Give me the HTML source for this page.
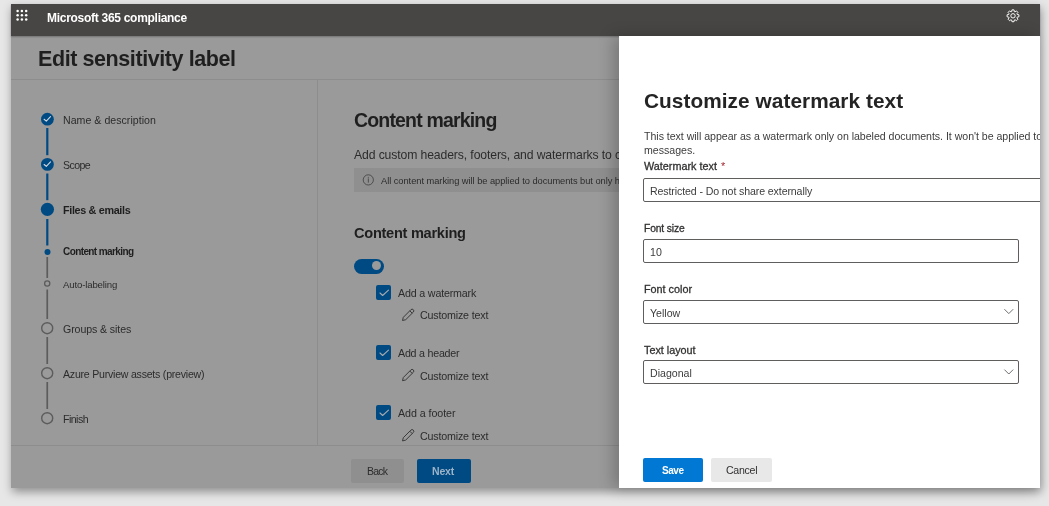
<!DOCTYPE html>
<html><head><meta charset="utf-8">
<style>
*{box-sizing:border-box;margin:0;padding:0}
html,body{width:1049px;height:506px;overflow:hidden;background:#e7e7e7;font-family:"Liberation Sans",sans-serif;position:relative}
.a{position:absolute}
.t{position:absolute;white-space:nowrap;line-height:1;will-change:transform}
#win{position:absolute;left:11px;top:4px;width:1029px;height:484px;background:#9a9a9a;box-shadow:1px 4px 9px rgba(0,0,0,0.38)}
#hdr{position:absolute;left:11px;top:4px;width:1029px;height:32px;background:#484644;box-shadow:0 1px 1.5px rgba(0,0,0,0.25)}
#panel{position:absolute;left:619px;top:36px;width:421px;height:452px;background:#fff;overflow:hidden}
#pshadow{position:absolute;left:619px;top:36px;width:421px;height:452px;box-shadow:-6px 0 14px rgba(0,0,0,0.22)}
.field{position:absolute;border:1px solid #605e5c;border-radius:2px;background:#fff}
.cb{position:absolute;width:15px;height:15px;background:#004a83;border-radius:2px}
</style></head>
<body>
<div id="win"></div>
<div id="hdr"></div>
<!-- app launcher -->
<svg class="a" style="left:15px;top:8px" width="14" height="14" viewBox="0 0 14 14">
  <g fill="#fff"><circle cx="2.6" cy="3" r="1.25"/><circle cx="6.9" cy="3" r="1.25"/><circle cx="11.2" cy="3" r="1.25"/>
  <circle cx="2.6" cy="7.3" r="1.25"/><circle cx="6.9" cy="7.3" r="1.25"/><circle cx="11.2" cy="7.3" r="1.25"/>
  <circle cx="2.6" cy="11.6" r="1.25"/><circle cx="6.9" cy="11.6" r="1.25"/><circle cx="11.2" cy="11.6" r="1.25"/></g>
</svg>
<div class=t style="left:47.00px;top:11.64px;font-size:12px;font-weight:bold;color:#ffffff;letter-spacing:-0.284px;">Microsoft 365 compliance</div>

<!-- gear -->
<svg class="a" style="left:1005px;top:8px" width="16" height="16" viewBox="0 0 16 16">
  <path d="M6.68 3.60 L6.96 1.89 L9.04 1.89 L9.32 3.60 L10.03 3.90 L11.44 2.89 L12.91 4.36 L11.90 5.77 L12.20 6.48 L13.91 6.76 L13.91 8.84 L12.20 9.12 L11.90 9.83 L12.91 11.24 L11.44 12.71 L10.03 11.70 L9.32 12.00 L9.04 13.71 L6.96 13.71 L6.68 12.00 L5.97 11.70 L4.56 12.71 L3.09 11.24 L4.10 9.83 L3.80 9.12 L2.09 8.84 L2.09 6.76 L3.80 6.48 L4.10 5.77 L3.09 4.36 L4.56 2.89 L5.97 3.90Z" fill="none" stroke="#fff" stroke-width="0.95" stroke-linejoin="round"/>
  <circle cx="8" cy="7.8" r="2.2" fill="none" stroke="#fff" stroke-width="0.95"/>
</svg>
<!-- dividers -->
<div class="a" style="left:11px;top:79px;width:608px;height:1px;background:#8d8d8d"></div>
<div class="a" style="left:317px;top:80px;width:1px;height:365px;background:#8d8d8d"></div>
<div class="a" style="left:11px;top:445px;width:608px;height:1px;background:#8d8d8d"></div>
<!-- nav -->
<svg class="a" style="left:0;top:0" width="320" height="445">
  <g fill="#004a83">
    <circle cx="47.4" cy="119.2" r="6.4"/>
    <circle cx="47.4" cy="164.4" r="6.4"/>
    <circle cx="47.4" cy="209.3" r="6.6"/>
    <circle cx="47.5" cy="252" r="3"/>
    <rect x="46.2" y="128" width="2.2" height="27.2"/>
    <rect x="46.2" y="173.5" width="2.2" height="26.7"/>
    <rect x="46.2" y="219" width="2.2" height="26.5"/>
  </g>
  <g fill="none" stroke="#d2d8de" stroke-width="1.1" stroke-linecap="round" stroke-linejoin="round">
    <path d="M44.1 119.3L46.3 121.1 50.5 116.7"/>
    <path d="M44.1 164.5L46.3 166.3 50.5 161.9"/>
  </g>
  <g fill="#5c5c5c">
    <rect x="46.4" y="257" width="1.7" height="21"/>
    <rect x="46.4" y="289.5" width="1.7" height="29.5"/>
    <rect x="46.4" y="337" width="1.7" height="27"/>
    <rect x="46.4" y="382" width="1.7" height="27"/>
  </g>
  <g fill="none" stroke="#5c5c5c">
    <circle cx="47.2" cy="283.5" r="2.6" stroke-width="1.3"/>
    <circle cx="47.2" cy="328.2" r="5.5" stroke-width="1.4"/>
    <circle cx="47.2" cy="373.2" r="5.5" stroke-width="1.4"/>
    <circle cx="47.2" cy="418.2" r="5.5" stroke-width="1.4"/>
  </g>
</svg>
<!-- info bar -->
<div class="a" style="left:353.5px;top:168px;width:266px;height:23.5px;background:#8f8f8f"></div>
<svg class="a" style="left:362px;top:174px" width="13" height="13" viewBox="0 0 13 13">
  <circle cx="6.3" cy="5.9" r="5.1" fill="none" stroke="#4a4a4a" stroke-width="0.95"/>
  <rect x="5.85" y="4.4" width="0.95" height="4.2" fill="#4a4a4a"/>
  <circle cx="6.32" cy="3.3" r="0.55" fill="#4a4a4a"/>
</svg>
<!-- toggle -->
<div class="a" style="left:353.5px;top:259px;width:30.5px;height:15px;border-radius:8px;background:#004a83"></div>
<div class="a" style="left:371.8px;top:261.3px;width:9.2px;height:9.2px;border-radius:50%;background:#9a9a9a"></div>
<!-- checkboxes -->
<div class="cb" style="left:376px;top:285px"></div>
<div class="cb" style="left:376px;top:345px"></div>
<div class="cb" style="left:376px;top:405px"></div>
<svg class="a" style="left:376px;top:285px" width="15" height="135">
  <g fill="none" stroke="#a6aaae" stroke-width="1.1" stroke-linecap="round" stroke-linejoin="round">
    <path d="M4 8L6.6 10.5 12.5 5.2"/>
    <path d="M4 68L6.6 70.5 12.5 65.2"/>
    <path d="M4 128L6.6 130.5 12.5 125.2"/>
  </g>
</svg>
<!-- pencils -->
<svg class="a" style="left:400px;top:307px" width="16" height="135">
  <g fill="none" stroke="#3a3a3a" stroke-width="1" stroke-linejoin="round">
    <path d="M2.5 13.5l0.8-3.2 7.6-7.6a1.3 1.3 0 0 1 2.4 2.4l-7.6 7.6z M9.8 3.8l2.4 2.4"/>
    <path d="M2.5 73.7l0.8-3.2 7.6-7.6a1.3 1.3 0 0 1 2.4 2.4l-7.6 7.6z M9.8 64l2.4 2.4"/>
    <path d="M2.5 133.9l0.8-3.2 7.6-7.6a1.3 1.3 0 0 1 2.4 2.4l-7.6 7.6z M9.8 124.2l2.4 2.4"/>
  </g>
</svg>
<!-- footer buttons -->
<div class="a" style="left:350.6px;top:459px;width:53.4px;height:23.7px;border-radius:2px;background:#8f8f8f"></div>
<div class="a" style="left:416.5px;top:459px;width:54px;height:23.7px;border-radius:2px;background:#004a83"></div>
<div class=t style="left:37.60px;top:48.70px;font-size:21.5px;font-weight:bold;color:#1f1f1f;letter-spacing:-0.416px;">Edit sensitivity label</div>
<div class=t style="left:62.90px;top:115.03px;font-size:10.6px;font-weight:normal;color:#2c2c2c;letter-spacing:0.026px;">Name &amp; description</div>
<div class=t style="left:62.90px;top:160.03px;font-size:10.6px;font-weight:normal;color:#2c2c2c;letter-spacing:-0.612px;">Scope</div>
<div class=t style="left:62.70px;top:205.26px;font-size:10.8px;font-weight:bold;color:#1f1f1f;letter-spacing:-0.332px;">Files &amp; emails</div>
<div class=t style="left:62.70px;top:247.13px;font-size:10.0px;font-weight:bold;color:#1f1f1f;letter-spacing:-0.596px;">Content marking</div>
<div class=t style="left:62.70px;top:280.37px;font-size:9.6px;font-weight:normal;color:#2c2c2c;letter-spacing:-0.139px;">Auto-labeling</div>
<div class=t style="left:62.90px;top:324.13px;font-size:10.6px;font-weight:normal;color:#2c2c2c;letter-spacing:-0.091px;">Groups &amp; sites</div>
<div class=t style="left:62.90px;top:369.13px;font-size:10.6px;font-weight:normal;color:#2c2c2c;letter-spacing:-0.236px;">Azure Purview assets (preview)</div>
<div class=t style="left:62.90px;top:414.13px;font-size:10.6px;font-weight:normal;color:#2c2c2c;letter-spacing:-0.533px;">Finish</div>
<div class=t style="left:354.30px;top:110.69px;font-size:19.5px;font-weight:bold;color:#1f1f1f;letter-spacing:-0.829px;">Content marking</div>
<div class=t style="left:354.00px;top:148.97px;font-size:12.2px;font-weight:normal;color:#2c2c2c;letter-spacing:-0.11px;">Add custom headers, footers, and watermarks to choose</div>
<div class=t style="left:381.20px;top:176.73px;font-size:9.3px;font-weight:normal;color:#2c2c2c;letter-spacing:-0.04px;">All content marking will be applied to documents but only headers</div>
<div class=t style="left:354.20px;top:225.74px;font-size:14.6px;font-weight:bold;color:#1f1f1f;letter-spacing:-0.281px;">Content marking</div>
<div class=t style="left:397.90px;top:287.94px;font-size:10.7px;font-weight:normal;color:#2c2c2c;letter-spacing:-0.174px;">Add a watermark</div>
<div class=t style="left:420.30px;top:310.44px;font-size:10.7px;font-weight:normal;color:#2c2c2c;letter-spacing:-0.178px;">Customize text</div>
<div class=t style="left:397.90px;top:347.94px;font-size:10.7px;font-weight:normal;color:#2c2c2c;letter-spacing:-0.238px;">Add a header</div>
<div class=t style="left:420.30px;top:370.64px;font-size:10.7px;font-weight:normal;color:#2c2c2c;letter-spacing:-0.178px;">Customize text</div>
<div class=t style="left:397.90px;top:407.94px;font-size:10.7px;font-weight:normal;color:#2c2c2c;letter-spacing:-0.061px;">Add a footer</div>
<div class=t style="left:420.30px;top:430.84px;font-size:10.7px;font-weight:normal;color:#2c2c2c;letter-spacing:-0.178px;">Customize text</div>
<div class=t style="left:366.60px;top:465.71px;font-size:10.5px;font-weight:normal;color:#2c2c2c;letter-spacing:-0.764px;">Back</div>
<div class=t style="left:432.20px;top:465.71px;font-size:10.5px;font-weight:bold;color:#9cb3c8;letter-spacing:-0.154px;">Next</div>

<!-- panel -->
<div id="pshadow"></div>
<div id="panel">
  <div class="field" style="left:24px;top:142px;width:430px;height:24px"></div>
  <div class="field" style="left:24px;top:203px;width:376px;height:24px"></div>
  <div class="field" style="left:24px;top:264px;width:376px;height:23.5px"></div>
  <div class="field" style="left:24px;top:324px;width:376px;height:24px"></div>
  <svg class="a" style="left:384px;top:270px" width="12" height="72">
    <g fill="none" stroke="#605e5c" stroke-width="0.9">
      <path d="M1.4 3.2l4.4 4.4 4.4-4.4"/>
      <path d="M1.4 63.6l4.4 4.4 4.4-4.4"/>
    </g>
  </svg>
  <div class="a" style="left:24.1px;top:422.2px;width:59.7px;height:23.5px;border-radius:2px;background:#0078d4"></div>
  <div class="a" style="left:92.1px;top:422.2px;width:61px;height:23.5px;border-radius:2px;background:#e8e8e8"></div>
<div class=t style="left:25.20px;top:55.39px;font-size:20.8px;font-weight:bold;color:#242424;letter-spacing:0.060px;">Customize watermark text</div>
<div class=t style="left:24.80px;top:94.63px;font-size:10.6px;font-weight:normal;color:#3c3c3c;letter-spacing:-0.03px;">This text will appear as a watermark only on labeled documents. It won't be applied to</div>
<div class=t style="left:24.80px;top:108.53px;font-size:10.6px;font-weight:normal;color:#3c3c3c;">messages.</div>
<div class=t style="left:24.80px;top:125.36px;font-size:10.8px;font-weight:normal;color:#323130;letter-spacing:0.008px;-webkit-text-stroke:0.3px #323130;">Watermark text</div>
<div class=t style="left:101.50px;top:125.36px;font-size:10.8px;font-weight:normal;color:#a4262c;">*</div>
<div class=t style="left:31.30px;top:150.13px;font-size:10.6px;font-weight:normal;color:#3c3c3c;letter-spacing:-0.110px;">Restricted - Do not share externally</div>
<div class=t style="left:24.90px;top:187.88px;font-size:10.3px;font-weight:normal;color:#323130;letter-spacing:-0.131px;-webkit-text-stroke:0.3px #323130;">Font size</div>
<div class=t style="left:30.90px;top:211.13px;font-size:10.6px;font-weight:normal;color:#3c3c3c;">10</div>
<div class=t style="left:24.90px;top:247.76px;font-size:10.8px;font-weight:normal;color:#323130;-webkit-text-stroke:0.3px #323130;">Font color</div>
<div class=t style="left:31.30px;top:271.63px;font-size:10.6px;font-weight:normal;color:#3c3c3c;">Yellow</div>
<div class=t style="left:24.90px;top:308.66px;font-size:10.8px;font-weight:normal;color:#323130;-webkit-text-stroke:0.3px #323130;">Text layout</div>
<div class=t style="left:31.30px;top:331.83px;font-size:10.6px;font-weight:normal;color:#3c3c3c;">Diagonal</div>
<div class=t style="left:43.20px;top:429.74px;font-size:10.0px;font-weight:bold;color:#ffffff;letter-spacing:-0.464px;">Save</div>
<div class=t style="left:107.10px;top:429.23px;font-size:10.6px;font-weight:normal;color:#323130;letter-spacing:-0.285px;">Cancel</div>

</div>
</body></html>
